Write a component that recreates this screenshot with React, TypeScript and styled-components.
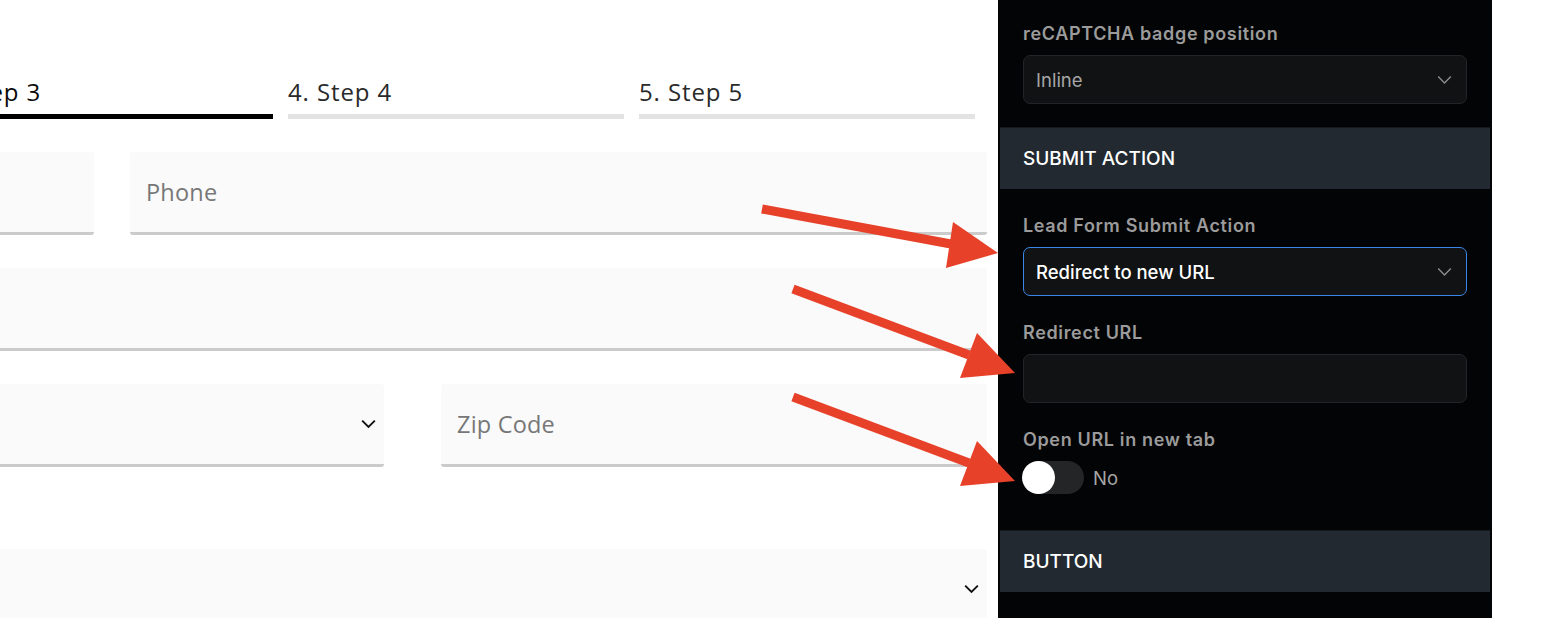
import React from 'react'
import styled, { createGlobalStyle } from 'styled-components'

const Global = createGlobalStyle`
  html, body {
    margin: 0;
    padding: 0;
    background: #ffffff;
  }
  * { box-sizing: border-box; }
`

const Page = styled.div`
  position: relative;
  width: 1542px;
  height: 618px;
  display: flex;
  overflow: hidden;
  background: #fff;
`

const Canvas = styled.div`
  width: 998px;
  flex-shrink: 0;
  overflow: hidden;
  padding: 0 11px 0 0;
  display: flex;
  flex-direction: column;
  font-family: 'Open Sans', 'Noto Sans', sans-serif;
`

const Steps = styled.div`
  display: flex;
  justify-content: flex-end;
  gap: 15px;
  padding: 75px 12px 0 0;
`

const Step = styled.div<{ $active?: boolean }>`
  flex-shrink: 0;
  width: 336px;
  font-size: 24px;
  font-weight: 500;
  letter-spacing: 0.9px;
  line-height: 34px;
  color: ${p => (p.$active ? '#0a0a0a' : '#2a2a2a')};
  padding-bottom: 5px;
  border-bottom: 5px solid ${p => (p.$active ? '#000' : '#e3e3e3')};
`

const Rows = styled.div`
  display: flex;
  flex-direction: column;
  padding-top: 33px;
`

const Row = styled.div<{ $gap?: number; $below?: number }>`
  display: flex;
  justify-content: flex-end;
  gap: ${p => p.$gap ?? 0}px;
  margin-bottom: ${p => p.$below ?? 33}px;
`

const Field = styled.div<{ $w: number }>`
  flex-shrink: 0;
  width: ${p => p.$w}px;
  height: 83px;
  background: #fafafa;
  border-bottom: 3px solid #cbcbcb;
  border-radius: 3px;
  display: flex;
  align-items: center;
  justify-content: space-between;
  padding: 0 8px 0 16px;
  font-size: 23.5px;
  letter-spacing: 0.2px;
  color: #777;
`

const Panel = styled.div`
  width: 494px;
  flex-shrink: 0;
  background: #030405;
  padding: 0 2px;
  font-family: Inter, 'Noto Sans', sans-serif;
  display: flex;
  flex-direction: column;
`

const Group = styled.div<{ $top: number; $bottom: number }>`
  display: flex;
  flex-direction: column;
  gap: 26px;
  padding: ${p => p.$top}px 23px ${p => p.$bottom}px;
`

const Item = styled.div`
  display: flex;
  flex-direction: column;
  gap: 10px;
`

const Label = styled.div`
  font-size: 18px;
  font-weight: 600;
  line-height: 22px;
  color: #9b9b9b;
  letter-spacing: 0.65px;
`

const Control = styled.div<{ $focus?: boolean; $bright?: boolean }>`
  height: 49px;
  border-radius: 7px;
  background: #111214;
  border: 1px solid ${p => (p.$focus ? '#3a86e8' : '#232427')};
  display: flex;
  align-items: center;
  justify-content: space-between;
  padding: 0 14px 0 12px;
  font-size: 18.5px;
  font-weight: ${p => (p.$bright ? 500 : 400)};
  color: ${p => (p.$bright ? '#ffffff' : '#a6a6a6')};
`

const Header = styled.div`
  height: 62px;
  background: #222930;
  border-top: 1px solid #151a1f;
  display: flex;
  align-items: center;
  padding-left: 23px;
  font-size: 19px;
  font-weight: 500;
  color: #fff;
`

const ToggleRow = styled.div`
  display: flex;
  align-items: center;
  gap: 9px;
  font-size: 18.5px;
  color: #a6a6a6;
`

const Track = styled.div`
  position: relative;
  width: 61px;
  height: 33px;
  border-radius: 17px;
  background: #242527;
`

const Knob = styled.span`
  position: absolute;
  left: -1px;
  top: 0;
  width: 33px;
  height: 33px;
  border-radius: 50%;
  background: #fff;
`

const Overlay = styled.svg`
  position: absolute;
  left: 0;
  top: 0;
  pointer-events: none;
`

const Chevron = ({ color, w = 14, sw = 1.4 }: { color: string; w?: number; sw?: number }) => (
  <svg width={w} height={w / 2 + 2} viewBox="0 0 14 9" fill="none">
    <path d="M1 1.5 L7 7.5 L13 1.5" stroke={color} strokeWidth={sw} />
  </svg>
)

const arrows = [
  { tail: [762, 209], mid: [951, 244], tip: [998, 253], a: [953, 222], b: [946, 268] },
  { tail: [793, 289], mid: [969, 355], tip: [1015, 373], a: [977, 333], b: [960, 378] },
  { tail: [793, 397], mid: [969, 463], tip: [1015, 481], a: [977, 441], b: [960, 486] },
]

export default function App() {
  return (
    <Page>
      <Global />
      <Canvas>
        <Steps>
          <Step $active>3. Step 3</Step>
          <Step>4. Step 4</Step>
          <Step>5. Step 5</Step>
        </Steps>
        <Rows>
          <Row $gap={36}>
            <Field $w={400} />
            <Field $w={857}>Phone</Field>
          </Row>
          <Row>
            <Field $w={1200} />
          </Row>
          <Row $gap={57} $below={82}>
            <Field $w={500}>
              <span />
              <Chevron color="#111" w={15} sw={1.8} />
            </Field>
            <Field $w={546}>Zip Code</Field>
          </Row>
          <Row>
            <Field $w={1200}>
              <span />
              <Chevron color="#111" w={15} sw={1.8} />
            </Field>
          </Row>
        </Rows>
      </Canvas>
      <Panel>
        <Group $top={23} $bottom={23}>
          <Item>
            <Label>reCAPTCHA badge position</Label>
            <Control>
              Inline
              <Chevron color="#8a8a8a" w={15} />
            </Control>
          </Item>
        </Group>
        <Header>SUBMIT ACTION</Header>
        <Group $top={26} $bottom={36}>
          <Item>
            <Label>Lead Form Submit Action</Label>
            <Control $focus $bright>
              Redirect to new URL
              <Chevron color="#8a8a8a" w={15} />
            </Control>
          </Item>
          <Item>
            <Label>Redirect URL</Label>
            <Control />
          </Item>
          <Item>
            <Label>Open URL in new tab</Label>
            <ToggleRow>
              <Track>
                <Knob />
              </Track>
              No
            </ToggleRow>
          </Item>
        </Group>
        <Header>BUTTON</Header>
      </Panel>
      <Overlay width={1542} height={618} viewBox="0 0 1542 618">
        {arrows.map((r, i) => (
          <g key={i} fill="#e8412a" stroke="#e8412a">
            <line x1={r.tail[0]} y1={r.tail[1]} x2={r.mid[0]} y2={r.mid[1]} strokeWidth={9} />
            <polygon points={`${r.tip.join(',')} ${r.a.join(',')} ${r.b.join(',')}`} stroke="none" />
          </g>
        ))}
      </Overlay>
    </Page>
  )
}
